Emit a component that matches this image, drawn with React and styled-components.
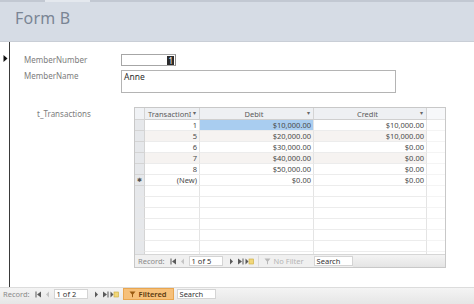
import React from 'react';
import styled, { createGlobalStyle } from 'styled-components';

const GlobalStyle = createGlobalStyle`
  html, body { margin: 0; padding: 0; background: #ffffff; }
  body { font-family: "Noto Sans", "Open Sans", sans-serif; }
`;

const rows = [
  { id: '1', debit: '$10,000.00', credit: '$10,000.00', selected: true },
  { id: '5', debit: '$20,000.00', credit: '$10,000.00' },
  { id: '6', debit: '$30,000.00', credit: '$0.00' },
  { id: '7', debit: '$40,000.00', credit: '$0.00' },
  { id: '8', debit: '$50,000.00', credit: '$0.00' },
];

function NavIcon({ kind }) {
  const c = '#5a5a5a';
  if (kind === 'first')
    return (
      <svg width="7" height="7" viewBox="0 0 7 7">
        <rect x="0.5" y="0.5" width="1" height="6" fill={c} />
        <path d="M6 0.5 L2 3.5 L6 6.5 Z" fill={c} />
      </svg>
    );
  if (kind === 'prev')
    return (
      <svg width="5" height="7" viewBox="0 0 5 7">
        <path d="M4 0.5 L1 3.5 L4 6.5 Z" fill="#c4c4c4" />
      </svg>
    );
  if (kind === 'next')
    return (
      <svg width="5" height="7" viewBox="0 0 5 7">
        <path d="M1 0.5 L4 3.5 L1 6.5 Z" fill={c} />
      </svg>
    );
  if (kind === 'last')
    return (
      <svg width="7" height="7" viewBox="0 0 7 7">
        <path d="M1 0.5 L5 3.5 L1 6.5 Z" fill={c} />
        <rect x="5.5" y="0.5" width="1" height="6" fill={c} />
      </svg>
    );
  return (
    <svg width="9" height="7" viewBox="0 0 9 7">
      <path d="M0.5 0.5 L3.5 3.5 L0.5 6.5 Z" fill={c} />
      <rect x="4" y="1" width="4.5" height="5" fill="#f1d77a" stroke="#c9a93a" strokeWidth="0.6" />
    </svg>
  );
}

function Funnel({ color }) {
  return (
    <svg width="7" height="7" viewBox="0 0 7 7">
      <path d="M0.5 0.5 H6.5 L4 3.5 V6.5 L3 5.8 V3.5 Z" fill={color} />
    </svg>
  );
}

function RecordNav({ count, filtered }) {
  return (
    <NavBar>
      <NavLabel>Record:</NavLabel>
      <IconBtn><NavIcon kind="first" /></IconBtn>
      <IconBtn><NavIcon kind="prev" /></IconBtn>
      <RecordBox>1 of {count}</RecordBox>
      <IconBtn><NavIcon kind="next" /></IconBtn>
      <IconBtn><NavIcon kind="last" /></IconBtn>
      <IconBtn><NavIcon kind="new" /></IconBtn>
      {filtered ? (
        <FilterBadge $on>
          <Funnel color="#9a5a10" /> Filtered
        </FilterBadge>
      ) : (
        <FilterBadge>
          <Funnel color="#b8b8b8" /> No Filter
        </FilterBadge>
      )}
      <SearchBox>Search</SearchBox>
    </NavBar>
  );
}

export default function App() {
  return (
    <>
      <GlobalStyle />
      <Page>
        <Header>
          <TopStrip>
            <ActiveTab />
          </TopStrip>
          <Title>Form B</Title>
        </Header>
        <Body>
          <Selector>
            <svg width="5" height="7" viewBox="0 0 5 7">
              <path d="M0.5 0 L4.5 3.5 L0.5 7 Z" fill="#111" />
            </svg>
          </Selector>
          <FormArea>
            <FieldRow>
              <FieldLabel>MemberNumber</FieldLabel>
              <NumberBox>
                <Selected>1</Selected>
              </NumberBox>
            </FieldRow>
            <FieldRow>
              <FieldLabel>MemberName</FieldLabel>
              <NameBox>Anne</NameBox>
            </FieldRow>
            <SubRow>
              <SubLabel>t_Transactions</SubLabel>
              <Subform>
                <Sheet>
                  <SheetRow $header>
                    <SelCell $header />
                    <HeadCell>
                      <span>TransactionI</span>
                      <Arrow>▾</Arrow>
                    </HeadCell>
                    <HeadCell $center>
                      <span>Debit</span>
                      <Arrow>▾</Arrow>
                    </HeadCell>
                    <HeadCell $center>
                      <span>Credit</span>
                      <Arrow>▾</Arrow>
                    </HeadCell>
                    <Filler $header />
                  </SheetRow>
                  {rows.map((r, i) => (
                    <SheetRow key={r.id} $alt={i % 2 === 1}>
                      <SelCell />
                      <Cell>{r.id}</Cell>
                      <Cell $selected={r.selected}>{r.debit}</Cell>
                      <Cell>{r.credit}</Cell>
                      <Filler />
                    </SheetRow>
                  ))}
                  <SheetRow>
                    <SelCell>✱</SelCell>
                    <Cell>(New)</Cell>
                    <Cell>$0.00</Cell>
                    <Cell>$0.00</Cell>
                    <Filler />
                  </SheetRow>
                  {Array.from({ length: 8 }).map((_, i) => (
                    <SheetRow key={'e' + i} $empty>
                      <SelCell $empty />
                      <Cell />
                      <Cell />
                      <Cell />
                      <Filler />
                    </SheetRow>
                  ))}
                </Sheet>
                <SubNavWrap>
                  <RecordNav count={5} />
                  <ScrollStub />
                </SubNavWrap>
              </Subform>
            </SubRow>
          </FormArea>
        </Body>
        <MainNavWrap>
          <RecordNav count={2} filtered />
        </MainNavWrap>
      </Page>
    </>
  );
}

const Page = styled.div`
  width: 474px;
  height: 304px;
  display: flex;
  flex-direction: column;
  overflow: hidden;
  background: #ffffff;
`;

const Header = styled.div`
  height: 41px;
  background: #d6dce5;
  border-bottom: 1px solid #c9ced6;
  display: flex;
  flex-direction: column;
`;

const TopStrip = styled.div`
  height: 2px;
  background: #c2c8d2;
  padding-left: 45px;
`;

const ActiveTab = styled.div`
  width: 45px;
  height: 2px;
  background: #e4e8ee;
`;

const Title = styled.div`
  padding: 5px 0 0 15px;
  font-size: 16px;
  color: #7a8594;
  letter-spacing: 0.2px;
`;

const Body = styled.div`
  flex: 1;
  display: flex;
  min-height: 0;
`;

const Selector = styled.div`
  width: 10px;
  border-right: 1px solid #3a3a3a;
  padding: 3px 0 0 3px;
  box-sizing: border-box;
  flex-shrink: 0;
`;

const FormArea = styled.div`
  flex: 1;
  padding: 12px 0 0 14px;
  display: flex;
  flex-direction: column;
`;

const FieldRow = styled.div`
  display: flex;
  align-items: flex-start;
  margin-bottom: 4px;
`;

const FieldLabel = styled.div`
  width: 97px;
  font-size: 8px;
  color: #7d7d7d;
  line-height: 10px;
  padding-top: 1px;
`;

const NumberBox = styled.div`
  width: 55px;
  height: 12px;
  box-sizing: border-box;
  border: 1px solid #a6a6a6;
  border-right-color: #8a8a8a;
  display: flex;
  justify-content: flex-end;
  align-items: center;
  padding-right: 1px;
`;

const Selected = styled.span`
  background: #2b2b2b;
  color: #ffffff;
  font-size: 8px;
  line-height: 9px;
  padding: 0 1px;
`;

const NameBox = styled.div`
  width: 275px;
  height: 23px;
  box-sizing: border-box;
  border: 1px solid #b4b4b4;
  font-size: 8.5px;
  color: #2d2d2d;
  padding: 1px 2px;
  line-height: 10px;
`;

const SubRow = styled.div`
  display: flex;
  align-items: flex-start;
  margin-top: 10px;
`;

const SubLabel = styled.div`
  width: 110px;
  padding: 2px 0 0 13px;
  box-sizing: border-box;
  font-size: 8px;
  color: #7d7d7d;
  line-height: 10px;
`;

const Subform = styled.div`
  width: 312px;
  height: 161px;
  box-sizing: border-box;
  border: 1px solid #c8c8c8;
  display: flex;
  flex-direction: column;
  background: #ffffff;
`;

const Sheet = styled.div`
  flex: 1;
  overflow: hidden;
  min-height: 0;
`;

const SheetRow = styled.div`
  display: grid;
  grid-template-columns: 10px 55px 114px 113px 1fr;
  height: ${(p) => (p.$header ? '12px' : '11px')};
  background: ${(p) => (p.$alt ? '#f6f3f1' : '#ffffff')};
  font-size: 7.5px;
  line-height: 10px;
  color: #4a4a4a;
`;

const SelCell = styled.div`
  background: ${(p) => (p.$header ? '#f0f2f5' : '#e6e8eb')};
  border-right: 1px solid #d4d4d4;
  border-bottom: 1px solid ${(p) => (p.$empty ? '#e8e8e8' : '#d4d4d4')};
  font-size: 6px;
  color: #555;
  text-align: center;
  line-height: 10px;
`;

const HeadCell = styled.div`
  display: flex;
  align-items: center;
  justify-content: ${(p) => (p.$center ? 'center' : 'flex-start')};
  position: relative;
  padding: 0 8px 0 3px;
  background: #eef0f3;
  border-right: 1px solid #d4d4d4;
  border-bottom: 1px solid #cfcfcf;
  color: #5a5a5a;
  font-size: 7.5px;
  overflow: hidden;
  white-space: nowrap;
`;

const Arrow = styled.span`
  position: absolute;
  right: 3px;
  top: 0;
  font-size: 6px;
  color: #666;
`;

const Cell = styled.div`
  text-align: right;
  padding-right: 2px;
  background: ${(p) => (p.$selected ? '#a9cdf0' : 'transparent')};
  border-right: 1px solid #e4e4e4;
  border-bottom: 1px solid #ececec;
  white-space: nowrap;
  overflow: hidden;
`;

const Filler = styled.div`
  background: ${(p) => (p.$header ? '#f7f8fa' : '#ffffff')};
  border-bottom: 1px solid ${(p) => (p.$header ? '#e6e6e6' : '#f4f4f4')};
`;

const SubNavWrap = styled.div`
  display: flex;
  height: 12px;
  border-top: 1px solid #d6d6d6;
  background: #f0f0f0;
`;

const ScrollStub = styled.div`
  flex: 1;
  background: linear-gradient(#f4f4f4, #e4e4e4);
`;

const MainNavWrap = styled.div`
  height: 14px;
  border-top: 1px solid #dcdcdc;
  background: linear-gradient(#f4f4f4, #e6e6e6);
  display: flex;
  padding-bottom: 2px;
`;

const NavBar = styled.div`
  display: flex;
  align-items: center;
  height: 12px;
  padding-left: 3px;
  font-size: 7.5px;
  color: #8a8a8a;
`;

const NavLabel = styled.span`
  margin-right: 4px;
`;

const IconBtn = styled.span`
  width: 9px;
  display: flex;
  justify-content: center;
  align-items: center;
`;

const RecordBox = styled.span`
  width: 34px;
  height: 10px;
  box-sizing: border-box;
  background: #ffffff;
  border: 1px solid #d4d4d4;
  color: #333;
  line-height: 8px;
  padding-left: 2px;
  margin: 0 4px 0 2px;
`;

const FilterBadge = styled.span`
  display: flex;
  align-items: center;
  gap: 3px;
  height: 10px;
  margin-left: 4px;
  padding: 0 6px 0 5px;
  background: ${(p) => (p.$on ? '#f6c07a' : 'transparent')};
  border: 1px solid ${(p) => (p.$on ? '#e9a650' : 'transparent')};
  border-left: 1px solid ${(p) => (p.$on ? '#e9a650' : '#dadada')};
  color: ${(p) => (p.$on ? '#5b3a10' : '#b4b4b4')};
  font-weight: ${(p) => (p.$on ? 600 : 400)};
`;

const SearchBox = styled.span`
  width: 39px;
  height: 10px;
  box-sizing: border-box;
  margin-left: 3px;
  background: #ffffff;
  border: 1px solid #d4d4d4;
  color: #333;
  line-height: 8px;
  padding-left: 2px;
`;
